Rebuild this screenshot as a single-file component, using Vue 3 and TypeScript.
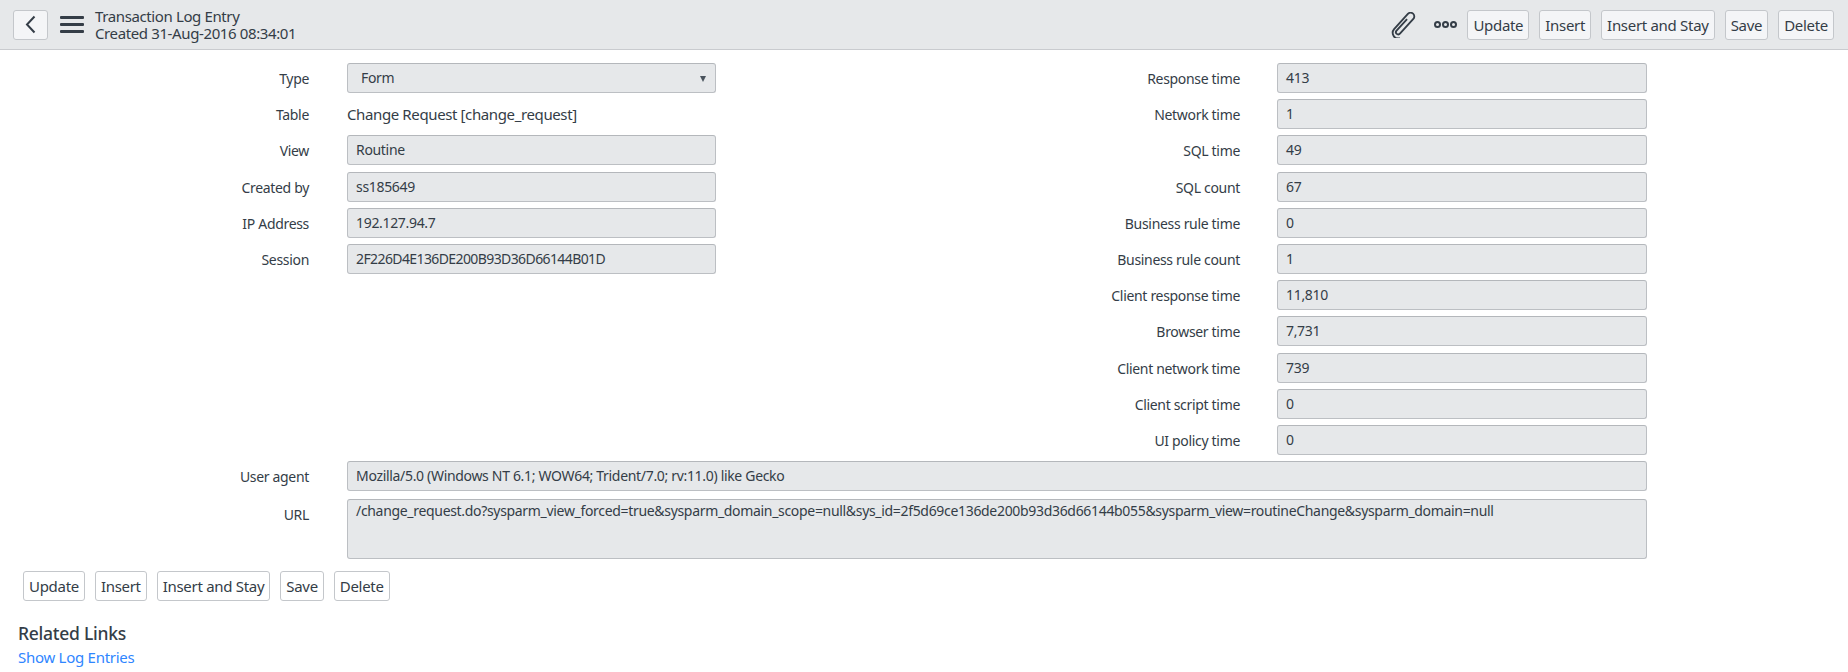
<script setup lang="ts">
interface Field { label: string; value: string; kind?: 'select' | 'text' | 'caps' }

const leftFields: Field[] = [
  { label: 'Type', value: 'Form', kind: 'select' },
  { label: 'Table', value: 'Change Request [change_request]', kind: 'text' },
  { label: 'View', value: 'Routine' },
  { label: 'Created by', value: 'ss185649' },
  { label: 'IP Address', value: '192.127.94.7' },
  { label: 'Session', value: '2F226D4E136DE200B93D36D66144B01D', kind: 'caps' },
]
const rightFields: Field[] = [
  { label: 'Response time', value: '413' },
  { label: 'Network time', value: '1' },
  { label: 'SQL time', value: '49' },
  { label: 'SQL count', value: '67' },
  { label: 'Business rule time', value: '0' },
  { label: 'Business rule count', value: '1' },
  { label: 'Client response time', value: '11,810' },
  { label: 'Browser time', value: '7,731' },
  { label: 'Client network time', value: '739' },
  { label: 'Client script time', value: '0' },
  { label: 'UI policy time', value: '0' },
]
const actions = ['Update', 'Insert', 'Insert and Stay', 'Save', 'Delete']
const url = '/change_request.do?sysparm_view_forced=true&sysparm_domain_scope=null&sys_id=2f5d69ce136de200b93d36d66144b055&sysparm_view=routineChange&sysparm_domain=null'
</script>

<template>
  <div class="page">
    <header class="bar">
      <button class="btn back" aria-label="Back">
        <svg width="11" height="19" viewBox="0 0 11 19"><path d="M9.5 1.5 2 9.5l7.5 8" fill="none" stroke="#343d47" stroke-width="2" /></svg>
      </button>
      <div class="burger"><span></span><span></span><span></span></div>
      <div class="title">
        <div>Transaction Log Entry</div>
        <div>Created 31-Aug-2016 08:34:01</div>
      </div>
      <div class="bar-right">
        <svg class="clip" width="26" height="26" viewBox="-12 -12 24 24">
          <path transform="rotate(42)" d="M-1.6 -6V8.5a2.1 2.1 0 0 0 4.2 0V-10a3.4 3.4 0 0 0-6.8 0V9a5.2 5.2 0 0 0 9.6 2.6" fill="none" stroke="#343d47" stroke-width="1.7" />
        </svg>
        <div class="dots"><i></i><i></i><i></i></div>
        <div class="actions">
          <button v-for="a in actions" :key="a" class="btn">{{ a }}</button>
        </div>
      </div>
    </header>

    <main class="form">
      <div class="cols">
        <section class="col left">
          <div v-for="f in leftFields" :key="f.label" class="row">
            <label class="lbl">{{ f.label }}</label>
            <div v-if="f.kind === 'text'" class="plain">{{ f.value }}</div>
            <div v-else-if="f.kind === 'select'" class="field select">{{ f.value }}<b class="arrow"></b></div>
            <div v-else class="field" :class="{ caps: f.kind === 'caps' }">{{ f.value }}</div>
          </div>
        </section>
        <section class="col right">
          <div v-for="f in rightFields" :key="f.label" class="row">
            <label class="lbl">{{ f.label }}</label>
            <div class="field">{{ f.value }}</div>
          </div>
        </section>
      </div>
      <div class="row wide">
        <label class="lbl">User agent</label>
        <div class="field">Mozilla/5.0 (Windows NT 6.1; WOW64; Trident/7.0; rv:11.0) like Gecko</div>
      </div>
      <div class="row wide url">
        <label class="lbl">URL</label>
        <div class="field area">{{ url }}</div>
      </div>
      <div class="actions bottom">
        <button v-for="a in actions" :key="a" class="btn white">{{ a }}</button>
      </div>
    </main>

    <section class="related">
      <h2>Related Links</h2>
      <a href="#">Show Log Entries</a>
    </section>
  </div>
</template>

<style scoped>
.page {
  width: 1848px;
  height: 672px;
  overflow: hidden;
  background: #fff;
  color: #343d47;
  font-family: "Noto Sans", sans-serif;
  font-size: 14px;
  letter-spacing: -0.32px;
}
.bar {
  height: 49px;
  box-sizing: content-box;
  border-bottom: 1px solid #c9cbcf;
  background: #e6e8ea;
  display: flex;
  align-items: center;
  padding: 0 14px 0 13px;
}
.btn {
  height: 30px;
  box-sizing: border-box;
  padding: 0 5px;
  border: 1px solid #c4c7cb;
  border-radius: 3px;
  background: #f4f5f7;
  color: #343d47;
  font-family: inherit;
  font-size: 15px;
  letter-spacing: -0.3px;
}
.btn.white { background: #fff; }
.back {
  width: 35px;
  padding: 0;
  display: flex;
  align-items: center;
  justify-content: center;
}
.burger {
  margin-left: 12px;
  width: 24px;
  display: flex;
  flex-direction: column;
  gap: 3.5px;
}
.burger span { height: 3.5px; background: #343d47; border-radius: 1px; }
.title {
  margin-left: 11px;
  line-height: 17px;
  font-size: 15px;
  letter-spacing: -0.38px;
}
.bar-right {
  margin-left: auto;
  display: flex;
  align-items: center;
}
.clip { margin-right: 17px; }
.dots { display: flex; gap: 1px; margin-right: 10px; }
.dots i {
  width: 7px;
  height: 7px;
  box-sizing: border-box;
  border: 2px solid #343d47;
  border-radius: 50%;
}
.actions { display: flex; gap: 10px; }
.form { padding-top: 13px; }
.cols { display: grid; grid-template-columns: 716px 931px; }
.col { display: flex; flex-direction: column; gap: 6.2px; }
.row { display: grid; align-items: start; height: 30px; }
.left .row, .wide { grid-template-columns: 309px 369px; column-gap: 38px; }
.right .row { grid-template-columns: 524px 370px; column-gap: 37px; }
.wide { grid-template-columns: 309px 1300px; margin-top: 6px; }
.url { height: 60px; margin-top: 8px; }
.lbl { text-align: right; line-height: 30px; padding-top: 1px; }
.plain {
  line-height: 30px;
  font-size: 15px;
  letter-spacing: -0.38px;
  white-space: nowrap;
}
.field {
  height: 30px;
  box-sizing: border-box;
  padding: 0 8px;
  line-height: 28px;
  background: #e6e8ea;
  border: 1px solid #bcbfc3;
  border-top-color: #b4b7bb;
  border-radius: 3px;
  white-space: nowrap;
}
.caps { letter-spacing: -0.6px; }
.select { position: relative; padding-left: 13px; }
.arrow {
  position: absolute;
  right: 9px;
  top: 12px;
  border: 3.5px solid transparent;
  border-top: 6px solid #4a535d;
  border-bottom: 0;
}
.area { height: 60px; line-height: 20px; padding-top: 1px; }
.bottom { margin: 12px 0 0 23px; }
.related { margin: 20px 0 0 18px; }
.related h2 {
  margin: 0;
  font-size: 17.5px;
  font-weight: 500;
  line-height: 24px;
  letter-spacing: -0.25px;
}
.related a {
  display: block;
  margin-top: 1px;
  line-height: 22px;
  color: #2f86ff;
  font-size: 15px;
  letter-spacing: -0.27px;
  text-decoration: none;
}
</style>
